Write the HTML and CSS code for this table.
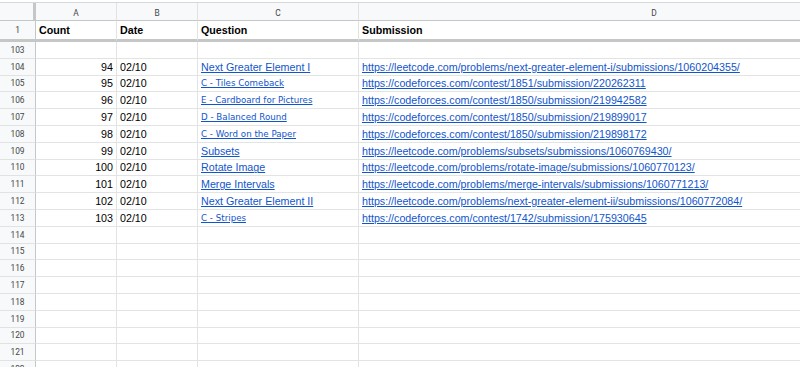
FILE: index.html
```html
<!DOCTYPE html>
<html lang="en">
<head>
    <meta charset="UTF-8">
    <title>Sheet</title>
    <link rel="stylesheet" href="styles.css">
</head>
<body>
    <div class="sheet">
        <div class="row col-heads">
            <div class="corner"></div>
            <div class="cell">A</div>
            <div class="cell">B</div>
            <div class="cell">C</div>
            <div class="cell">D</div>
        </div>

        <div class="row frozen">
            <div class="num">1</div>
            <div class="cell bold">Count</div>
            <div class="cell bold">Date</div>
            <div class="cell bold">Question</div>
            <div class="cell bold">Submission</div>
        </div>

        <div class="row">
            <div class="num">103</div>
            <div class="cell"></div><div class="cell"></div><div class="cell"></div><div class="cell"></div>
        </div>
        <div class="row">
            <div class="num">104</div>
            <div class="cell right">94</div>
            <div class="cell">02/10</div>
            <div class="cell"><a href="#">Next Greater Element I</a></div>
            <div class="cell"><a href="#">https://leetcode.com/problems/next-greater-element-i/submissions/1060204355/</a></div>
        </div>
        <div class="row">
            <div class="num">105</div>
            <div class="cell right">95</div>
            <div class="cell">02/10</div>
            <div class="cell"><a href="#" class="cf">C - Tiles Comeback</a></div>
            <div class="cell"><a href="#">https://codeforces.com/contest/1851/submission/220262311</a></div>
        </div>
        <div class="row">
            <div class="num">106</div>
            <div class="cell right">96</div>
            <div class="cell">02/10</div>
            <div class="cell"><a href="#" class="cf">E - Cardboard for Pictures</a></div>
            <div class="cell"><a href="#">https://codeforces.com/contest/1850/submission/219942582</a></div>
        </div>
        <div class="row">
            <div class="num">107</div>
            <div class="cell right">97</div>
            <div class="cell">02/10</div>
            <div class="cell"><a href="#" class="cf">D - Balanced Round</a></div>
            <div class="cell"><a href="#">https://codeforces.com/contest/1850/submission/219899017</a></div>
        </div>
        <div class="row">
            <div class="num">108</div>
            <div class="cell right">98</div>
            <div class="cell">02/10</div>
            <div class="cell"><a href="#" class="cf">C - Word on the Paper</a></div>
            <div class="cell"><a href="#">https://codeforces.com/contest/1850/submission/219898172</a></div>
        </div>
        <div class="row">
            <div class="num">109</div>
            <div class="cell right">99</div>
            <div class="cell">02/10</div>
            <div class="cell"><a href="#">Subsets</a></div>
            <div class="cell"><a href="#">https://leetcode.com/problems/subsets/submissions/1060769430/</a></div>
        </div>
        <div class="row">
            <div class="num">110</div>
            <div class="cell right">100</div>
            <div class="cell">02/10</div>
            <div class="cell"><a href="#">Rotate Image</a></div>
            <div class="cell"><a href="#">https://leetcode.com/problems/rotate-image/submissions/1060770123/</a></div>
        </div>
        <div class="row">
            <div class="num">111</div>
            <div class="cell right">101</div>
            <div class="cell">02/10</div>
            <div class="cell"><a href="#">Merge Intervals</a></div>
            <div class="cell"><a href="#">https://leetcode.com/problems/merge-intervals/submissions/1060771213/</a></div>
        </div>
        <div class="row">
            <div class="num">112</div>
            <div class="cell right">102</div>
            <div class="cell">02/10</div>
            <div class="cell"><a href="#">Next Greater Element II</a></div>
            <div class="cell"><a href="#">https://leetcode.com/problems/next-greater-element-ii/submissions/1060772084/</a></div>
        </div>
        <div class="row">
            <div class="num">113</div>
            <div class="cell right">103</div>
            <div class="cell">02/10</div>
            <div class="cell"><a href="#" class="cf">C - Stripes</a></div>
            <div class="cell"><a href="#">https://codeforces.com/contest/1742/submission/175930645</a></div>
        </div>

        <div class="row"><div class="num">114</div><div class="cell"></div><div class="cell"></div><div class="cell"></div><div class="cell"></div></div>
        <div class="row"><div class="num">115</div><div class="cell"></div><div class="cell"></div><div class="cell"></div><div class="cell"></div></div>
        <div class="row"><div class="num">116</div><div class="cell"></div><div class="cell"></div><div class="cell"></div><div class="cell"></div></div>
        <div class="row"><div class="num">117</div><div class="cell"></div><div class="cell"></div><div class="cell"></div><div class="cell"></div></div>
        <div class="row"><div class="num">118</div><div class="cell"></div><div class="cell"></div><div class="cell"></div><div class="cell"></div></div>
        <div class="row"><div class="num">119</div><div class="cell"></div><div class="cell"></div><div class="cell"></div><div class="cell"></div></div>
        <div class="row"><div class="num">120</div><div class="cell"></div><div class="cell"></div><div class="cell"></div><div class="cell"></div></div>
        <div class="row"><div class="num">121</div><div class="cell"></div><div class="cell"></div><div class="cell"></div><div class="cell"></div></div>
        <div class="row"><div class="num">122</div><div class="cell"></div><div class="cell"></div><div class="cell"></div><div class="cell"></div></div>
    </div>
</body>
</html>
```

FILE: styles.css
```css
* {
    margin: 0;
    padding: 0;
    box-sizing: border-box;
}

html, body {
    height: 100%;
    overflow: hidden;
    background: #fff;
}

body {
    font-family: "Liberation Sans", Arial, sans-serif;
    font-size: 10.7px;
    color: #000;
    padding-top: 2px;
}

.sheet {
    width: 950px;
    border-top: 1px solid #d6d8da;
}

.row {
    display: grid;
    grid-template-columns: 36px 81px 81px 161px 591px;
    height: 16.8px;
}

.cell,
.num,
.corner {
    border-right: 1px solid #e2e3e3;
    border-bottom: 1px solid #e2e3e3;
    display: flex;
    align-items: center;
    padding: 0 3px;
    white-space: nowrap;
    overflow: hidden;
}

.num {
    justify-content: center;
    background: #f8f9fa;
    border-right-color: #c4c7c5;
    border-bottom-color: #e1e3e1;
    color: #444746;
    font-family: Roboto, "Liberation Sans", sans-serif;
    font-size: 8.4px;
}

.col-heads {
    height: 18px;
}

.col-heads .cell {
    justify-content: center;
    background: #f8f9fa;
    border-bottom-color: #c4c7c5;
    border-right-color: #e1e3e1;
    color: #444746;
    font-family: Roboto, "Liberation Sans", sans-serif;
    font-size: 8.4px;
    padding-top: 2px;
}

.corner {
    background: #f8f9fa;
    border-right: 3px solid #c4c7c5;
    border-bottom-color: #c4c7c5;
}

.frozen {
    height: 21px;
}

.frozen > div {
    border-bottom: 3px solid #c4c7c5;
}

.bold {
    font-weight: bold;
}

.right {
    justify-content: flex-end;
}

a {
    color: #1155cc;
    text-decoration: underline;
}

a.cf {
    font-family: "DejaVu Sans", Verdana, sans-serif;
    font-size: 8.7px;
}
```
